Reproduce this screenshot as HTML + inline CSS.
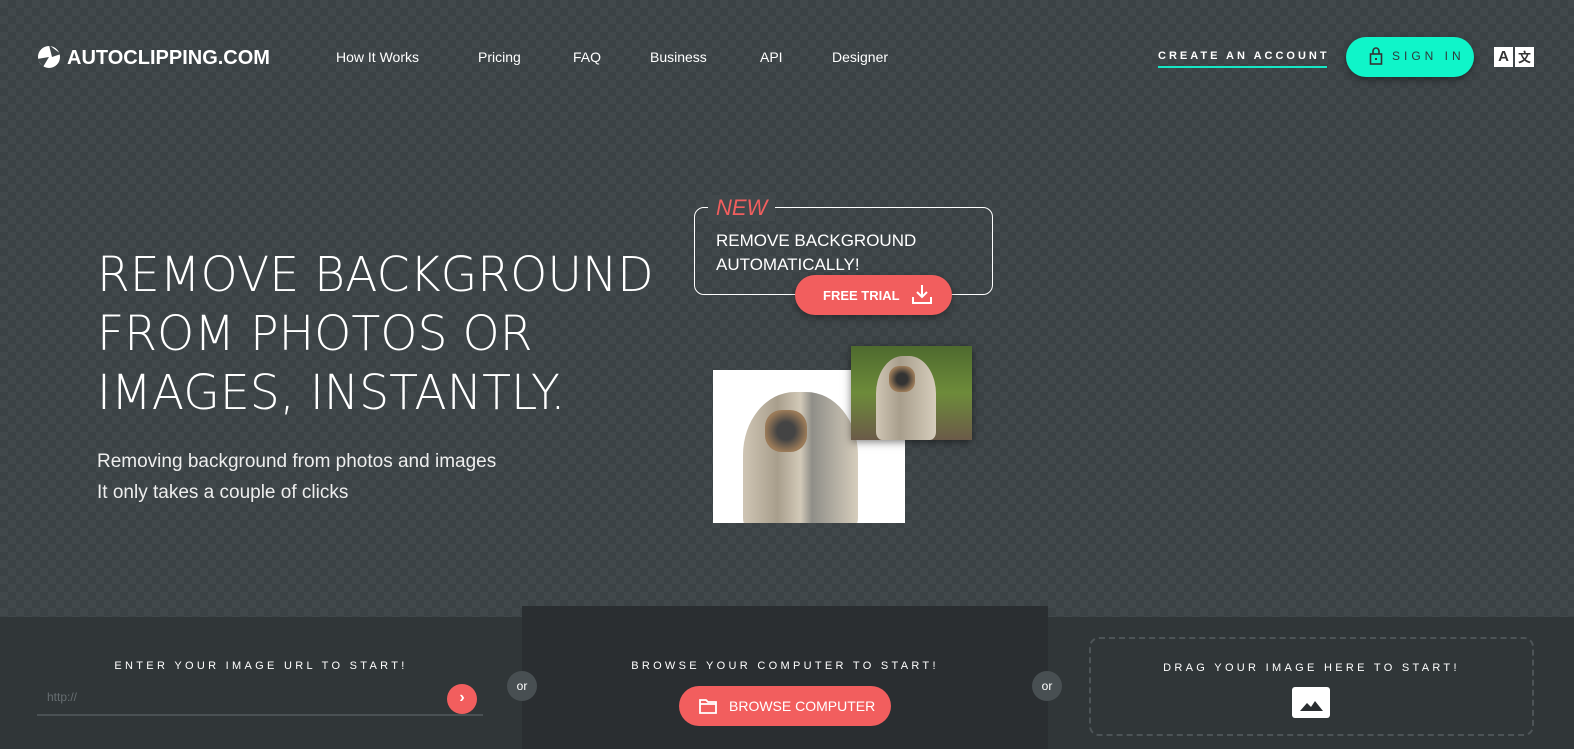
<!DOCTYPE html>
<html><head><meta charset="utf-8"><style>
*{margin:0;padding:0;box-sizing:border-box}
body{width:1574px;height:749px;overflow:hidden;font-family:"Liberation Sans",sans-serif;color:#fff;
background-color:#41484b;
background-image:linear-gradient(45deg,#3b4245 25%,transparent 25%,transparent 75%,#3b4245 75%),linear-gradient(45deg,#3b4245 25%,transparent 25%,transparent 75%,#3b4245 75%);
background-size:16px 16px;background-position:0 0,8px 8px;position:relative}
.abs{position:absolute}
.nav a{position:absolute;top:49px;font-size:14px;color:#fff;text-decoration:none}
.sp{letter-spacing:3px;font-size:11px;font-weight:bold}
</style></head><body>
<svg class="abs" style="left:37px;top:45px" width="24" height="24" viewBox="0 0 24 24"><circle cx="12" cy="12" r="11" fill="#fff"/><path d="M12 0 L15 12 L24 9 Z M0 14 L12 12 L6 22Z" fill="#41484b"/></svg>
<div class="abs" style="left:67px;top:47px;font-size:20px;font-weight:bold;letter-spacing:0px">AUTOCLIPPING.COM</div>
<div class="nav">
<a style="left:336px">How It Works</a><a style="left:478px">Pricing</a><a style="left:573px">FAQ</a><a style="left:650px">Business</a><a style="left:760px">API</a><a style="left:832px">Designer</a>
</div>
<div class="abs sp" style="left:1158px;top:50px;font-size:11px">CREATE AN ACCOUNT</div>
<div class="abs" style="left:1158px;top:66px;width:169px;height:2px;background:#14e8c6"></div>
<div class="abs" style="left:1346px;top:37px;width:128px;height:40px;border-radius:20px;background:#0ff5c9;box-shadow:0 3px 8px rgba(0,0,0,.4)"></div>
<svg class="abs" style="left:1369px;top:47px" width="14" height="18" viewBox="0 0 14 18"><rect x="1.5" y="7" width="11" height="10" fill="none" stroke="#333" stroke-width="1.6"/><path d="M4 7V4a3 3 0 0 1 6 0v3" fill="none" stroke="#333" stroke-width="1.6"/><rect x="6" y="11" width="2" height="2" fill="#333"/></svg>
<div class="abs sp" style="left:1392px;top:49px;color:#2e3a3a;font-weight:normal;font-size:12px;letter-spacing:4px">SIGN IN</div>
<div class="abs" style="left:1494px;top:47px;width:19px;height:20px;background:#fff;color:#333;font-weight:bold;font-size:15px;text-align:center;line-height:20px">A</div>
<div class="abs" style="left:1515px;top:47px;width:19px;height:20px;background:#fff;color:#333;font-weight:bold;font-size:13px;text-align:center;line-height:20px;font-family:'Noto Sans CJK SC',sans-serif">文</div>

<div class="abs" style="left:97px;top:246px;font-size:48px;line-height:59px;font-family:'DejaVu Sans','Liberation Sans',sans-serif;font-weight:200;transform:scaleX(0.985);transform-origin:left;white-space:nowrap">REMOVE BACKGROUND<br>FROM PHOTOS OR<br>IMAGES, INSTANTLY.</div>
<div class="abs" style="left:97px;top:446px;font-size:19px;line-height:31px;color:#eee">Removing background from photos and images<br>It only takes a couple of clicks</div>

<div class="abs" style="left:694px;top:207px;width:299px;height:88px;border:1px solid #fff;border-radius:10px"></div>
<div class="abs" style="left:708px;top:195px;padding:0 8px;background:#41484b;color:#f25e5e;font-style:italic;font-size:22px">NEW</div>
<div class="abs" style="left:716px;top:229px;font-size:17px;line-height:24px">REMOVE BACKGROUND<br>AUTOMATICALLY!</div>
<div class="abs" style="left:795px;top:275px;width:157px;height:40px;border-radius:20px;background:#f25e5e;box-shadow:0 3px 8px rgba(0,0,0,.35)"></div>
<div class="abs" style="left:823px;top:288px;font-size:13px;font-weight:bold">FREE TRIAL</div>
<svg class="abs" style="left:911px;top:283px" width="22" height="22" viewBox="0 0 22 22" fill="none" stroke="#fff" stroke-width="2"><path d="M11 2v12M6 9l5 5 5-5M2 14v6h18v-6"/></svg>

<div class="abs" style="left:713px;top:370px;width:192px;height:153px;background:#fff;overflow:hidden">
<div class="abs" style="left:30px;top:22px;width:115px;height:140px;border-radius:45% 45% 10% 10%;background:linear-gradient(90deg,#cfc5b4,#a89e8c 30%,#d2c9b8 50%,#8f8e88 60%,#d6cdbc)"></div>
<div class="abs" style="left:52px;top:40px;width:42px;height:42px;border-radius:40%;background:radial-gradient(#444 30%,#9a7a58 70%)"></div>
</div>
<div class="abs" style="left:851px;top:346px;width:121px;height:94px;background:linear-gradient(#4e6a2e,#6d8b3a 50%,#6b5a48);box-shadow:0 2px 8px rgba(0,0,0,.5);overflow:hidden">
<div class="abs" style="left:25px;top:10px;width:60px;height:84px;border-radius:45% 45% 10% 10%;background:linear-gradient(90deg,#cfc5b4,#a89e8c 40%,#d6cdbc)"></div>
<div class="abs" style="left:38px;top:20px;width:26px;height:26px;border-radius:40%;background:radial-gradient(#333 30%,#9a7a58 70%)"></div>
</div>

<div class="abs" style="left:0;top:617px;width:1574px;height:132px;background:#303638"></div>
<div class="abs" style="left:522px;top:606px;width:526px;height:143px;background:#2a2e31"></div>
<div class="abs sp" style="left:0;top:660px;width:522px;text-align:center;font-weight:normal;letter-spacing:3.3px">ENTER YOUR IMAGE URL TO START!</div>
<div class="abs" style="left:47px;top:690px;font-size:12px;color:#666d70">http://</div>
<div class="abs" style="left:37px;top:714px;width:446px;height:2px;background:#4a5154"></div>
<div class="abs" style="left:447px;top:684px;width:30px;height:30px;border-radius:50%;background:#f25e5e;text-align:center;line-height:28px;font-weight:bold;font-size:16px">›</div>
<div class="abs" style="left:507px;top:671px;width:30px;height:30px;border-radius:50%;background:#484f52;text-align:center;line-height:30px;font-size:12px">or</div>
<div class="abs" style="left:1032px;top:671px;width:30px;height:30px;border-radius:50%;background:#484f52;text-align:center;line-height:30px;font-size:12px">or</div>
<div class="abs sp" style="left:522px;top:660px;width:526px;text-align:center;font-weight:normal;letter-spacing:3.3px">BROWSE YOUR COMPUTER TO START!</div>
<div class="abs" style="left:679px;top:686px;width:212px;height:40px;border-radius:20px;background:#f25e5e"></div>
<svg class="abs" style="left:699px;top:698px" width="18" height="16" viewBox="0 0 18 16" fill="none" stroke="#fff" stroke-width="1.8"><path d="M1 2h6l2 2h8v11H1z M1 6h16"/></svg>
<div class="abs" style="left:729px;top:698px;font-size:14px">BROWSE COMPUTER</div>
<div class="abs" style="left:1089px;top:637px;width:445px;height:99px;border:2px dashed #4d5457;border-radius:10px"></div>
<div class="abs sp" style="left:1089px;top:662px;width:445px;text-align:center;font-weight:normal;letter-spacing:3.3px">DRAG YOUR IMAGE HERE TO START!</div>
<div class="abs" style="left:1292px;top:687px;width:38px;height:31px;background:#fff;border-radius:3px"></div>
<svg class="abs" style="left:1300px;top:700px" width="23" height="12" viewBox="0 0 23 12"><path d="M0 11L7 3l4 4 4-6 8 10z" fill="#2a2e31"/></svg>
</body></html>
